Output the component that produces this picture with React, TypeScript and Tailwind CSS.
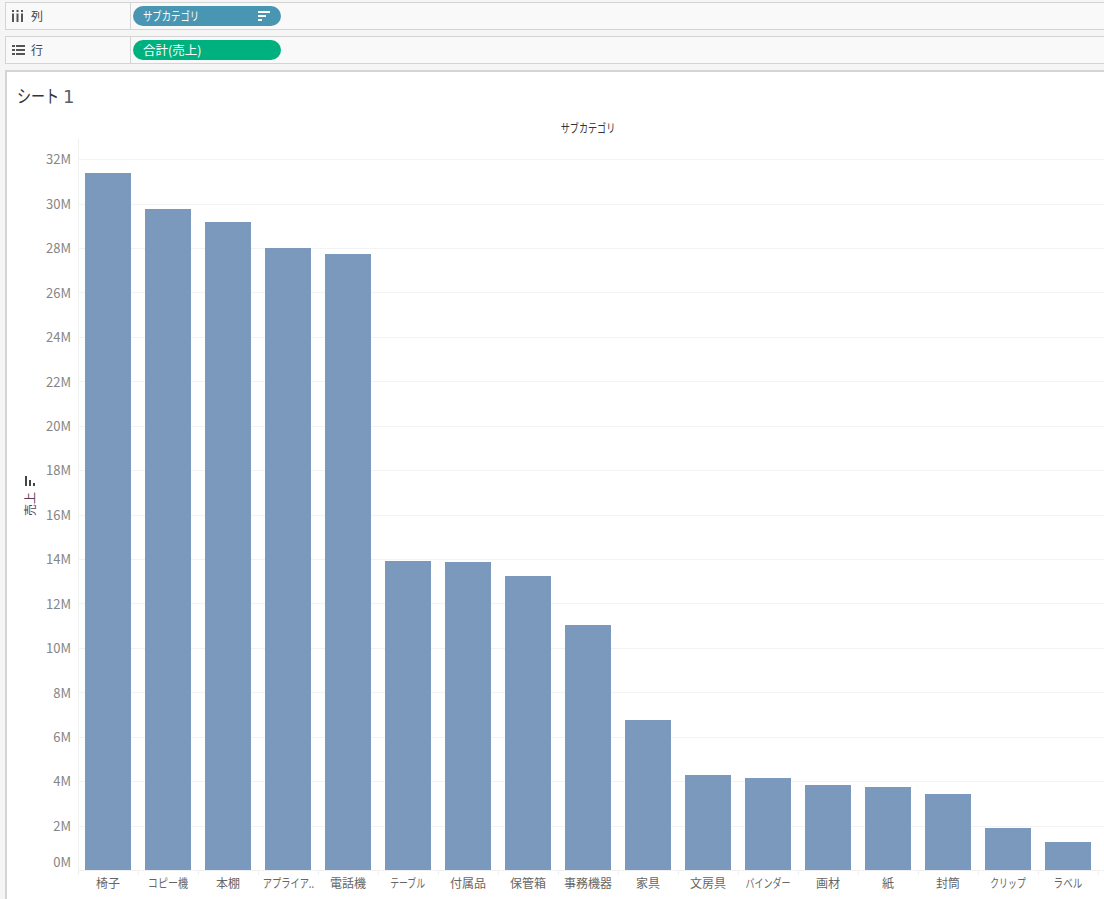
const JP = "font-['Noto_Sans_CJK_JP','Liberation_Sans',sans-serif]";

const BASELINE = 731;
const STEP = 44.43;

// kana in the reference font is much narrower than Noto, so squeeze those labels
const bars = [
  { name: "椅子", top: 173, squeeze: "" },
  { name: "コピー機", top: 209, squeeze: "scale-x-[0.84]" },
  { name: "本棚", top: 222, squeeze: "" },
  { name: "アプライア..", top: 248, squeeze: "scale-x-[0.77]" },
  { name: "電話機", top: 254, squeeze: "" },
  { name: "テーブル", top: 561, squeeze: "scale-x-[0.74]" },
  { name: "付属品", top: 562, squeeze: "" },
  { name: "保管箱", top: 576, squeeze: "" },
  { name: "事務機器", top: 625, squeeze: "" },
  { name: "家具", top: 720, squeeze: "" },
  { name: "文房具", top: 775, squeeze: "" },
  { name: "バインダー", top: 778, squeeze: "scale-x-[0.75]" },
  { name: "画材", top: 785, squeeze: "" },
  { name: "紙", top: 787, squeeze: "" },
  { name: "封筒", top: 794, squeeze: "" },
  { name: "クリップ", top: 828, squeeze: "scale-x-[0.74]" },
  { name: "ラベル", top: 842, squeeze: "scale-x-[0.8]" },
];

const ticks = Array.from({ length: 17 }, (_, i) => i * 2);

function ColumnsIcon() {
  return (
    <svg width="11" height="12" viewBox="0 0 11 12" className="fill-[#555555]">
      <rect x="0" y="0" width="2" height="2" />
      <rect x="0" y="3.5" width="2" height="8.5" />
      <rect x="4.5" y="0" width="2" height="2" />
      <rect x="4.5" y="3.5" width="2" height="8.5" />
      <rect x="9" y="0" width="2" height="2" />
      <rect x="9" y="3.5" width="2" height="8.5" />
    </svg>
  );
}

function RowsIcon() {
  return (
    <svg width="13" height="11" viewBox="0 0 13 11" className="fill-[#555555]">
      <rect x="0" y="0" width="3" height="2" />
      <rect x="4" y="0" width="9" height="2" />
      <rect x="0" y="4" width="3" height="2" />
      <rect x="4" y="4" width="9" height="2" />
      <rect x="0" y="8" width="3" height="2" />
      <rect x="4" y="8" width="9" height="2" />
    </svg>
  );
}

function PillSortIcon() {
  return (
    <svg width="12" height="10" viewBox="0 0 12 10" className="fill-white">
      <rect x="0" y="0" width="12" height="2" />
      <rect x="0" y="4" width="8" height="2" />
      <rect x="0" y="8" width="4" height="2" />
    </svg>
  );
}

function AxisSortIcon() {
  return (
    <svg width="10" height="10" viewBox="0 0 10 10" className="fill-[#444444]">
      <rect x="0" y="0" width="2" height="10" />
      <rect x="4" y="4" width="2" height="6" />
      <rect x="8" y="7" width="2" height="3" />
    </svg>
  );
}

function Shelf({
  icon,
  label,
  pillClass,
  pill,
  sort,
}: {
  icon: React.ReactNode;
  label: string;
  pillClass: string;
  pill: React.ReactNode;
  sort?: boolean;
}) {
  return (
    <div className="flex h-[28px] shrink-0 border border-r-0 border-[#d4d4d4] bg-[#f9f9f9]">
      <div className="flex w-[125px] shrink-0 items-center border-r border-[#d4d4d4]">
        <div className="flex w-[25px] justify-start pl-[6px]">{icon}</div>
        <span className="text-[12px] text-[#444444]">{label}</span>
      </div>
      <div className="flex items-center pl-[2px]">
        <div
          className={`flex h-[20px] w-[148px] items-center justify-between rounded-full pl-[10px] pr-[11px] text-white ${pillClass}`}
        >
          {pill}
          {sort && <PillSortIcon />}
        </div>
      </div>
    </div>
  );
}

export default function App() {
  return (
    <div className={`flex h-[899px] w-full flex-col gap-[6px] overflow-hidden bg-[#f5f5f5] pl-[5px] pt-[2px] ${JP}`}>
      <Shelf
        icon={<ColumnsIcon />}
        label="列"
        pill={
          <span className="inline-block w-[54px] origin-left scale-x-[0.78] whitespace-nowrap text-[12px]">
            サブカテゴリ
          </span>
        }
        pillClass="bg-[#4996b2]"
        sort
      />
      <Shelf
        icon={<RowsIcon />}
        label="行"
        pill={<span className="text-[12.5px]">合計(売上)</span>}
        pillClass="bg-[#00b180]"
      />

      <div className="flex min-h-0 flex-1 flex-col border-l-2 border-t-2 border-[#d4d4d4] bg-white">
        <h1 className="ml-[10px] mt-[8px] h-[30px] shrink-0 text-[18px] leading-[30px] text-[#333333]">
          <span className="inline-block w-[42px] origin-left scale-x-[0.78] whitespace-nowrap">シート</span>
          <span className="ml-[4px] font-['DejaVu_Sans'] font-normal text-[#55606b]">1</span>
        </h1>
        <div className="ml-[71px] mt-[10px] flex h-[19px] w-[1020px] shrink-0 items-center justify-center pb-[3px] text-[12px] text-[#333333]">
          <span className="scale-x-[0.76] whitespace-nowrap">サブカテゴリ</span>
        </div>

        <div className="flex shrink-0">
          <div className="relative h-[731px] w-[71px] shrink-0">
            {ticks.map((t) => (
              <span
                key={t}
                className="absolute right-[7px] -translate-y-1/2 text-[13px] leading-none text-[#858585]"
                style={{ top: t === 0 ? BASELINE - 9.5 : BASELINE - (t / 2) * STEP - 0.7 }}
              >
                {t}M
              </span>
            ))}
            <div className="absolute left-[17px] top-[337px] flex w-[12px] flex-col items-center gap-[6px]">
              <AxisSortIcon />
              <span className="rotate-180 text-[12px] leading-none text-[#5b3c55] [text-orientation:sideways] [writing-mode:vertical-rl]">
                売上
              </span>
            </div>
          </div>

          <div className="relative flex h-[732px] flex-1 items-end border-b border-[#f0f0f0]">
            <div className="absolute inset-y-0 left-0 w-px bg-[#f0f0f0]" />
            {ticks.slice(1).map((t) => (
              <div
                key={t}
                className="absolute inset-x-0 h-px bg-[#f3f3f3]"
                style={{ top: BASELINE - (t / 2) * STEP }}
              />
            ))}
            {bars.map((b) => (
              <div key={b.name} className="relative z-10 flex h-full w-[60px] shrink-0 items-end justify-center">
                <div className="w-[46px] bg-[#7a99bc]" style={{ height: 870 - b.top }} />
              </div>
            ))}
          </div>
        </div>

        <div className="ml-[71px] flex w-[1021px] shrink-0">
          {bars.map((b) => (
            <div
              key={b.name}
              className="relative flex h-[23px] w-[60px] shrink-0 items-center justify-center text-[12px] text-[#666666]"
            >
              <div className="absolute left-0 top-0 h-[4px] w-px bg-[#f0f0f0]" />
              <span className={`whitespace-nowrap ${b.squeeze}`}>{b.name}</span>
            </div>
          ))}
          <div className="h-[4px] w-px bg-[#f0f0f0]" />
        </div>
      </div>
    </div>
  );
}
